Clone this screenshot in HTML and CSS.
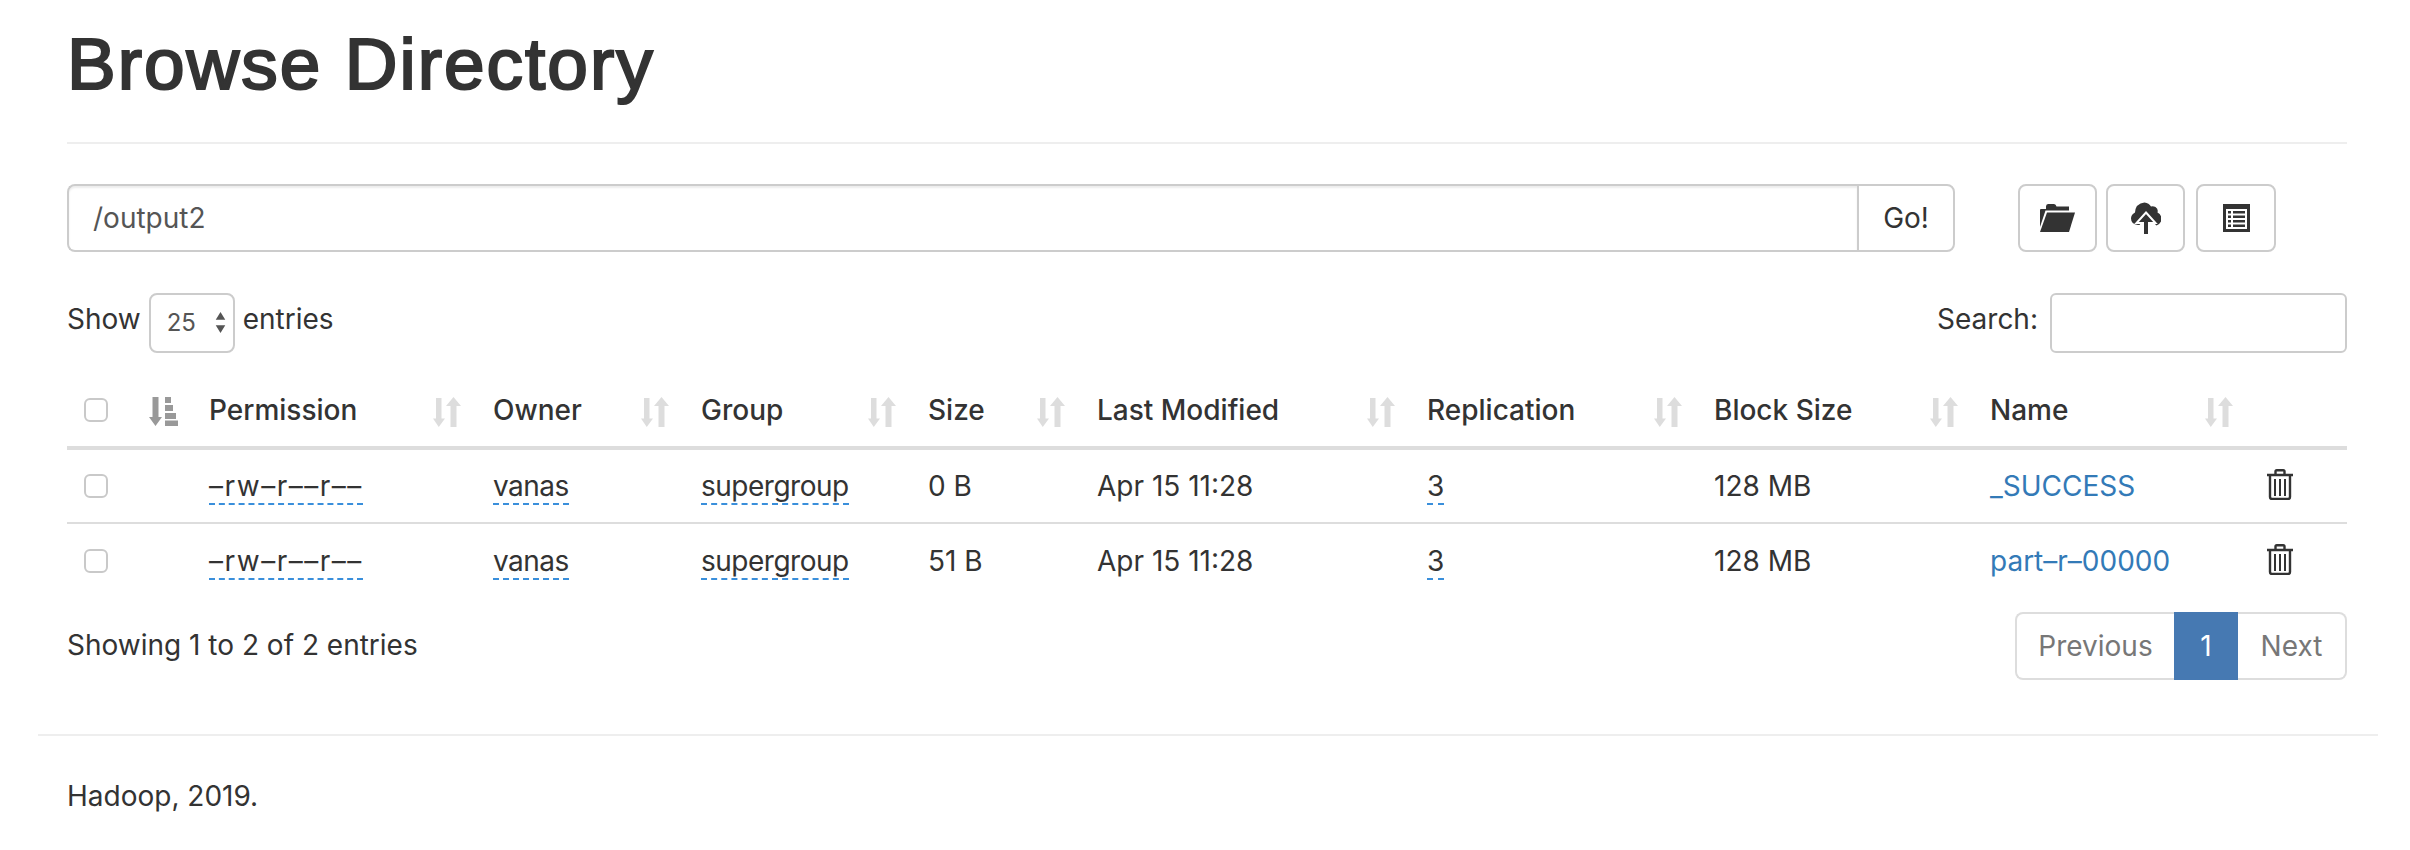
FILE: index.html
```html
<!DOCTYPE html>
<html lang="en">
<head>
<meta charset="utf-8">
<title>Browse Directory</title>
<link rel="stylesheet" href="styles.css">
</head>
<body>
<svg class="defs" width="0" height="0" aria-hidden="true">
  <symbol id="i-sort" viewBox="0 0 28 30">
    <path d="M3 1h5.500v20.500H12L5.750 30 0 21.500h3z"/>
    <path d="M20.500 0L28 9h-4.500v21h-6V9H13z"/>
  </symbol>
  <symbol id="i-sorted" viewBox="0 0 29 29">
    <path d="M3.500 0h6v20H13l-6.500 9L0 20h3.500z"/>
    <path d="M16 0h6v6h-6zM16 8h8v6h-8zM16 16h11v6H16zM16 23.500h13V29H16z"/>
  </symbol>
  <symbol id="i-trash" viewBox="0 0 26 31">
    <path fill="none" stroke="currentColor" stroke-width="2.400" d="M0 6h26M8.500 5.500V2.500q0-1.300 1.300-1.300h6.400q1.300 0 1.300 1.300v3M3 6v22q0 2 2 2h16q2 0 2-2V6"/>
    <path fill="none" stroke="currentColor" stroke-width="2" d="M8 10v17M13 10v17M18 10v17"/>
  </symbol>
</svg>
<main class="page">
  <h1 class="title">Browse Directory</h1>
  <hr class="rule">
  <div class="toolbar">
    <div class="path-group">
      <input class="path-input" type="text" value="/output2" aria-label="Path">
      <button class="btn go-btn" type="button">Go!</button>
    </div>
    <div class="tool-buttons">
      <button class="btn icon-btn" type="button" aria-label="Create directory">
        <svg class="tool-icon folder" viewBox="0 0 35 28"><path d="M6 5V2.500Q6 0 8 0h6q2 0 2.500 2.500H29v4H5.500L2 17 0 23V6q0-1 1-1z"/><path d="M7 8.500h28L29 28H0z"/></svg>
      </button>
      <button class="btn icon-btn" type="button" aria-label="Upload">
        <svg class="tool-icon cloud" viewBox="0 0 30 32"><path d="M8.500 23H7q-7-1-7-6.500 0-4 4-6 .5-9 9.500-10 4.500.500 6.500 4 2-.800 4.500.500 3 2 2 5.500 4 2 4 6.500 0 4-5 6.500l-10-10z"/><path d="M15 10.500L24.500 21h-6.500v11h-6V21H5.500z" stroke="#fff" stroke-width="2"/><path d="M15 14l6 6h-4v12h-4V20H9z"/></svg>
      </button>
      <button class="btn icon-btn btn-last" type="button" aria-label="Details">
        <svg class="tool-icon list" viewBox="0 0 27 28"><path fill-rule="evenodd" d="M0 0h27v28H0zM3 5v20h21V5z"/><path d="M5 7h3v2.500H5zM10 7h12v2.500H10zM5 11.500h3V14H5zM10 11.500h12V14H10zM5 16h3v2.500H5zM10 16h12v2.500H10zM5 20.500h3V23H5zM10 20.500h12V23H10z"/></svg>
      </button>
    </div>
  </div>
  <div class="controls">
    <label class="length"><span class="lift">Show</span>
      <span class="select-wrap">
        <select class="length-select" aria-label="Entries"><option>25</option><option>50</option></select>
        <svg class="select-arrows" viewBox="0 0 10 22"><path d="M5 0l5 8H0zM5 22l-5-8h10z"/></svg>
      </span>
      <span class="lift">entries</span></label>
    <label class="search"><span class="lift">Search:</span> <input class="search-input" type="text"></label>
  </div>
  <table class="files">
    <colgroup>
      <col class="c-check"><col class="c-perm"><col class="c-owner"><col class="c-group"><col class="c-size"><col class="c-mod"><col class="c-rep"><col class="c-block"><col class="c-name"><col class="c-del">
    </colgroup>
    <thead>
      <tr>
        <th><input class="check" type="checkbox" aria-label="Select all"><svg class="sort sort-on"><use href="#i-sorted"/></svg></th>
        <th>Permission<svg class="sort"><use href="#i-sort"/></svg></th>
        <th>Owner<svg class="sort"><use href="#i-sort"/></svg></th>
        <th>Group<svg class="sort"><use href="#i-sort"/></svg></th>
        <th>Size<svg class="sort"><use href="#i-sort"/></svg></th>
        <th>Last Modified<svg class="sort"><use href="#i-sort"/></svg></th>
        <th>Replication<svg class="sort"><use href="#i-sort"/></svg></th>
        <th>Block Size<svg class="sort"><use href="#i-sort"/></svg></th>
        <th>Name<svg class="sort"><use href="#i-sort"/></svg></th>
        <th></th>
      </tr>
    </thead>
    <tbody>
      <tr>
        <td><input class="check" type="checkbox" aria-label="Select _SUCCESS"></td>
        <td><span class="editable perm">–rw–r––r––</span></td>
        <td><span class="editable">vanas</span></td>
        <td><span class="editable">supergroup</span></td>
        <td>0 B</td>
        <td>Apr 15 11:28</td>
        <td><span class="editable">3</span></td>
        <td>128 MB</td>
        <td><a class="file-link" href="#">_SUCCESS</a></td>
        <td><svg class="trash"><use href="#i-trash"/></svg></td>
      </tr>
      <tr>
        <td><input class="check" type="checkbox" aria-label="Select part-r-00000"></td>
        <td><span class="editable perm">–rw–r––r––</span></td>
        <td><span class="editable">vanas</span></td>
        <td><span class="editable">supergroup</span></td>
        <td>51 B</td>
        <td>Apr 15 11:28</td>
        <td><span class="editable">3</span></td>
        <td>128 MB</td>
        <td><a class="file-link" href="#">part–r–00000</a></td>
        <td><svg class="trash"><use href="#i-trash"/></svg></td>
      </tr>
    </tbody>
  </table>
  <div class="table-foot">
    <div class="info">Showing 1 to 2 of 2 entries</div>
    <nav class="pager">
      <a class="page-item page-prev" href="#">Previous</a>
      <a class="page-item page-active" href="#">1</a>
      <a class="page-item page-next" href="#">Next</a>
    </nav>
  </div>
</main>
<footer class="foot">
  <hr class="foot-rule">
  <p class="copy">Hadoop, 2019.</p>
</footer>
</body>
</html>
```

FILE: styles.css
```css
* { box-sizing: border-box; }
html, body { margin: 0; padding: 0; background: #fff; }
body {
  height: 850px;
  overflow: hidden;
  font-family: "Inter", "Liberation Sans", sans-serif;
  font-size: 28px;
  line-height: 40px;
  color: #333;
}
.defs { position: absolute; }
.page { padding: 0 63px 0 67px; }
.title {
  margin: 0;
  padding-top: 22px;
  height: 142px;
  font-family: "Liberation Sans", sans-serif;
  font-size: 73px;
  font-weight: 400;
  line-height: 84px;
  letter-spacing: 2px;
  -webkit-text-stroke: 2.200px #333;
  color: #333;
}
.rule { margin: 0; border: 0; height: 2px; background: #eee; }
.toolbar { display: flex; margin-top: 40px; height: 68px; }
.path-group { display: flex; width: 1888px; }
.path-input {
  flex: 1;
  min-width: 0;
  height: 68px;
  padding: 0 24px;
  font: inherit;
  color: #555;
  border: 2px solid #ccc;
  border-right: 0;
  border-radius: 8px 0 0 8px;
  box-shadow: inset 0 2px 2px rgba(0,0,0,.075);
  outline: none;
}
.btn {
  display: flex;
  align-items: center;
  justify-content: center;
  height: 68px;
  padding: 0;
  font: inherit;
  color: #333;
  background: #fff;
  border: 2px solid #ccc;
  border-radius: 8px;
}
.go-btn { width: 98px; border-radius: 0 8px 8px 0; }
.tool-buttons { display: flex; gap: 9px; margin-left: 63px; }
.icon-btn { width: 79px; }
.btn-last { margin-left: 2px; width: 80px; }
.tool-icon { fill: #333; display: block; }
.folder { width: 35px; height: 28px; }
.cloud { width: 30px; height: 32px; }
.list { width: 27px; height: 28px; }
.controls {
  display: flex;
  justify-content: space-between;
  align-items: center;
  margin-top: 41px;
  height: 60px;
}
.length, .search { display: flex; align-items: center; }
.lift { display: block; margin-top: -8px; }
.select-wrap { position: relative; display: block; margin: 0 8px 0 8px; }
.length-select {
  display: block;
  width: 86px;
  height: 60px;
  padding: 0 0 0 16px;
  font: inherit;
  font-size: 24px;
  line-height: 56px;
  color: #555;
  background: #fff;
  border: 2px solid #ccc;
  border-radius: 8px;
  appearance: none;
  outline: none;
}
.select-arrows { position: absolute; right: 9px; top: 19px; width: 11px; height: 21px; fill: #555; }
.search-input {
  display: block;
  width: 297px;
  height: 60px;
  margin-left: 12px;
  border: 2px solid #ccc;
  border-radius: 6px;
  outline: none;
}
.files {
  width: 2280px;
  table-layout: fixed;
  border-collapse: separate;
  border-spacing: 0;
  margin-top: 21px;
}
.c-check { width: 126px; }
.c-perm { width: 284px; }
.c-owner { width: 208px; }
.c-group { width: 227px; }
.c-size { width: 169px; }
.c-mod { width: 330px; }
.c-rep { width: 287px; }
.c-block { width: 276px; }
.c-name { width: 275px; }
.c-del { width: 98px; }
.files th {
  position: relative;
  height: 76px;
  padding: 0 16px;
  text-align: left;
  font-weight: 550;
  border-bottom: 4px solid #ddd;
}
.files td {
  height: 74px;
  padding: 0 16px;
  vertical-align: middle;
  border-bottom: 2px solid #ddd;
}
.files tbody tr:last-child td { border-bottom: 0; }
.sort {
  position: absolute;
  right: 16px;
  top: 23px;
  width: 28px;
  height: 30px;
  fill: #ddd;
}
.sort-on { right: 15px; width: 29px; height: 29px; fill: #999; }
.check {
  display: block;
  width: 24px;
  height: 24px;
  margin: 0 0 0 1px;
  appearance: none;
  background: #fff;
  border: 2px solid #c9c9c9;
  border-radius: 6px;
}
.editable {
  display: inline-block;
  line-height: 34px;
  letter-spacing: -.5px;
  border-bottom: 2px dashed #3a8fdb;
}
.editable.perm { letter-spacing: 1.500px; }
.file-link { color: #337ab7; text-decoration: none; }
.trash { display: block; width: 26px; height: 31px; margin: -4px 0 0 2px; color: #333; }
.table-foot {
  display: flex;
  justify-content: space-between;
  align-items: flex-start;
  margin-top: 14px;
}
.info { padding-top: 13px; }
.pager { display: flex; height: 68px; }
.page-item {
  display: flex;
  align-items: center;
  justify-content: center;
  text-decoration: none;
  color: #777;
  background: #fff;
  border: 2px solid #ddd;
}
.page-prev { width: 159px; border-right: 0; border-radius: 8px 0 0 8px; }
.page-active { width: 64px; color: #fff; background: #4679b2; border-color: #4679b2; }
.page-next { width: 109px; border-left: 0; border-radius: 0 8px 8px 0; }
.foot { padding: 0 32px 0 38px; }
.foot-rule { margin: 54px 0 0; border: 0; height: 2px; background: #eee; }
.copy { margin: 40px 0 0 29px; }
```
